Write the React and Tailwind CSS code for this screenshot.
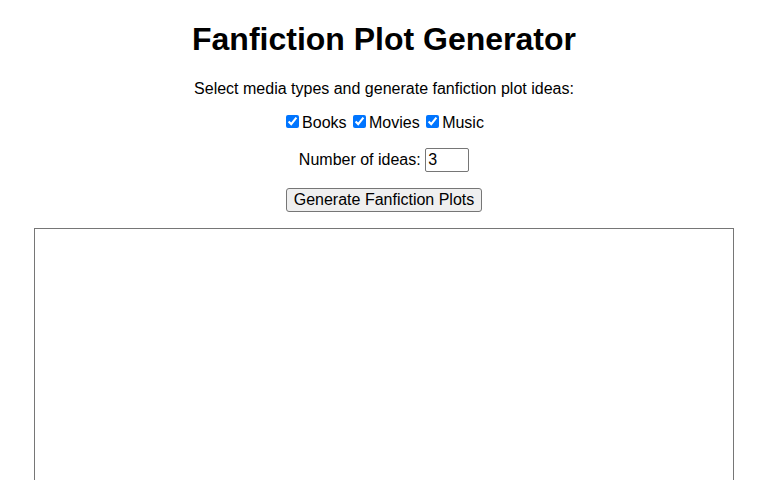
export default function App() {
  return (
    <div className="text-center text-black bg-white leading-[normal] text-[16px]" style={{ fontFamily: '"Liberation Sans", Arial, sans-serif' }}>
      <h1 className="text-[32px] font-bold pt-[21.44px] mb-[21.44px]">Fanfiction Plot Generator</h1>
      <p className="mb-4">Select media types and generate fanfiction plot ideas:</p>
      <p className="mb-4">
        <input type="checkbox" defaultChecked className="w-[13px] h-[13px] my-0 mr-[3px] ml-[2px]" />Books{" "}
        <input type="checkbox" defaultChecked className="w-[13px] h-[13px] my-0 mr-[3px] ml-[2px]" />Movies{" "}
        <input type="checkbox" defaultChecked className="w-[13px] h-[13px] my-0 mr-[3px] ml-[2px]" />Music
      </p>
      <p className="mb-4">
        Number of ideas:{" "}
        <input type="number" defaultValue="3" className="w-[44px] h-[24px] border border-[#767676] rounded-[2px] px-[2px] py-[1px] text-left bg-white [appearance:textfield]" />
      </p>
      <p className="mb-4">
        <button className="bg-[#efefef] border border-[#767676] rounded-[3px] px-[7px] py-[1px] h-[24px]">Generate Fanfiction Plots</button>
      </p>
      <textarea className="w-[700px] h-[300px] border border-[#767676] block mx-auto resize-none"></textarea>
    </div>
  );
}
